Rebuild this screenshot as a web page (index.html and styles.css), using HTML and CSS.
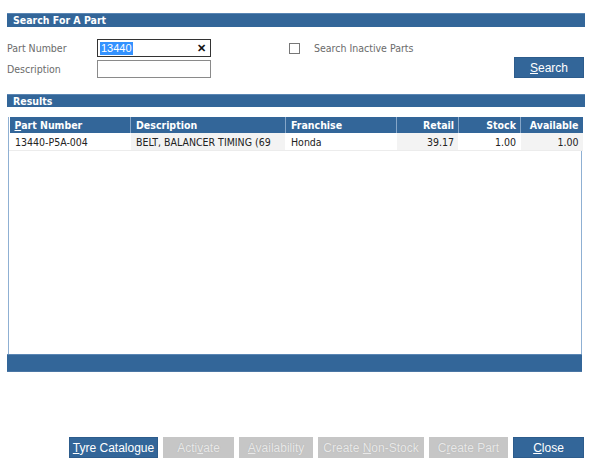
FILE: index.html
```html
<!DOCTYPE html>
<html>
<head>
<meta charset="utf-8">
<link rel="stylesheet" href="styles.css">
</head>
<body>
<div class="page">
  <div class="bar">Search For A Part</div>
  <div class="form">
    <label class="lbl r1">Part Number</label>
    <div class="input r1 c2"><span class="sel">13440</span><span class="clear">✕</span></div>
    <span class="check r1"></span>
    <label class="lbl chk-lbl r1">Search Inactive Parts</label>
    <label class="lbl r2">Description</label>
    <div class="input r2 c2"></div>
    <button class="btn search r2"><u>S</u>earch</button>
  </div>
  <div class="bar results-bar">Results</div>
  <div class="panel">
    <table class="grid">
      <colgroup>
        <col class="w1"><col class="w2"><col class="w3"><col class="w4"><col class="w5"><col class="w6">
      </colgroup>
      <thead>
        <tr>
          <th><u>P</u>art Number</th>
          <th>Description</th>
          <th>Franchise</th>
          <th class="num">Retail</th>
          <th class="num">Stock</th>
          <th class="num">Available</th>
        </tr>
      </thead>
      <tbody>
        <tr>
          <td>13440-P5A-004</td>
          <td class="alt">BELT, BALANCER TIMING (69</td>
          <td>Honda</td>
          <td class="num alt">39.17</td>
          <td class="num">1.00</td>
          <td class="num alt">1.00</td>
        </tr>
      </tbody>
    </table>
    <div class="filler"></div>
    <div class="foot"></div>
  </div>
  <div class="actions">
    <button class="btn w-tyre"><u>T</u>yre Catalogue</button>
    <button class="btn off w-act">Acti<u>v</u>ate</button>
    <button class="btn off w-av"><u>A</u>vailability</button>
    <button class="btn off w-ns">Create <u>N</u>on-Stock</button>
    <button class="btn off w-cp">C<u>r</u>eate Part</button>
    <button class="btn w-close"><u>C</u>lose</button>
  </div>
</div>
</body>
</html>
```
FILE: styles.css
```css
html, body {
  margin: 0;
  padding: 0;
  background: #ffffff;
}
body {
  font-family: "DejaVu Sans Condensed", "DejaVu Sans", sans-serif;
  font-stretch: condensed;
  font-size: 10px;
  color: #222;
}
.page {
  width: 592px;
  height: 466px;
  box-sizing: border-box;
  padding: 13px 7px 8px 7px;
  display: flex;
  flex-direction: column;
}
.bar {
  height: 14px;
  box-sizing: border-box;
  background: #336699;
  border-top: 1px solid #5a86b4;
  color: #fff;
  font-weight: bold;
  font-size: 10.5px;
  line-height: 13px;
  padding-left: 6px;
}
.results-bar {
  height: 13px;
  line-height: 12px;
}
.form {
  display: grid;
  grid-template-columns: 90px 114px 78px 11px 1fr 71px;
  grid-template-rows: 18px 18px;
  row-gap: 3px;
  padding-top: 12px;
  height: 67px;
  box-sizing: border-box;
}
.r1 { grid-row: 1; }
.r2 { grid-row: 2; }
.c2 { grid-column: 2; }
.lbl {
  grid-column: 1;
  color: #6b6b6b;
  font-size: 10.5px;
  align-self: center;
}
.input {
  box-sizing: border-box;
  border: 1px solid #7a7a7a;
  display: flex;
  align-items: center;
  justify-content: space-between;
  padding: 0 4px 0 2px;
  font-family: "Liberation Sans", Arial, sans-serif;
  font-size: 11px;
}
.r1.input { border-color: #333; }
.r2.input { border-color: #8a8a8a; }
.sel {
  background: #3392ff;
  color: #fff;
  line-height: 13px;
  padding: 0 1px;
}
.clear {
  font-size: 11px;
  font-weight: bold;
  color: #111;
}
.check {
  grid-column: 4;
  width: 11px;
  height: 11px;
  box-sizing: border-box;
  border: 1px solid #777;
  align-self: center;
}
.chk-lbl {
  grid-column: 5;
  padding-left: 14px;
}
.search {
  grid-column: 6;
  align-self: end;
  height: 20px;
  margin-right: 1px;
}
.btn {
  box-sizing: border-box;
  border: 1px solid #2d5c8c;
  background: #336699;
  color: #fff;
  font-family: "Liberation Sans", Arial, sans-serif;
  font-size: 12px;
  padding: 0;
  height: 21px;
}
.btn.off {
  background: #c6c6c6;
  border-color: #c6c6c6;
  color: #e9e9e9;
  text-shadow: 0 0 1px #a8a8a8;
}
.panel {
  margin-top: 10px;
  margin-left: 1px;
  margin-right: 3px;
  flex: 0 0 255px;
  display: flex;
  flex-direction: column;
  border-left: 1px solid #8fb0d3;
  border-right: 1px solid #8fb0d3;
}
.grid {
  width: 100%;
  border-collapse: collapse;
  table-layout: fixed;
}
.w1 { width: 121px; }
.w2 { width: 155px; }
.w3 { width: 111px; }
.w4 { width: 62px; }
.w5 { width: 62px; }
.w6 { width: 62px; }
.grid th {
  background: #336699;
  color: #fff;
  font-weight: bold;
  font-size: 10.5px;
  text-align: left;
  height: 16px;
  padding: 0 5px;
  border-left: 1px solid #86a6c8;
  white-space: nowrap;
}
.grid th:first-child { border-left: none; }
.grid td {
  height: 17px;
  padding: 0 5px;
  font-size: 10.5px;
  color: #222;
  border-left: 1px solid #fff;
  border-bottom: 1px solid #ececec;
  white-space: nowrap;
  overflow: hidden;
}
.grid .num { text-align: right; padding-right: 4px; }
.grid td.alt { background: #f3f3f3; }
.filler { flex: 1; }
.foot {
  height: 18px;
  margin-left: -2px;
  margin-right: -1px;
  background: #336699;
  border-top: 1px solid #5a86b4;
  border-bottom: 1px solid #4a76a4;
  box-sizing: border-box;
}
.actions {
  margin-top: auto;
  display: flex;
  justify-content: flex-end;
  gap: 5px;
  padding-right: 1px;
}
.w-tyre { width: 89px; }
.w-act { width: 71px; }
.w-av { width: 74px; }
.w-ns { width: 106px; }
.w-cp { width: 79px; }
.w-close { width: 71px; }
```
